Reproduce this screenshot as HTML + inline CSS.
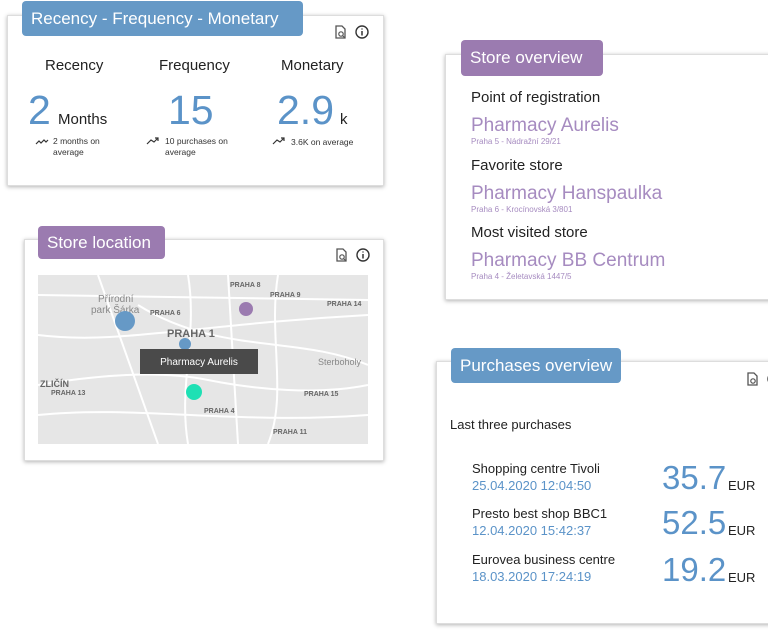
<!DOCTYPE html>
<html><head><meta charset="utf-8"><style>
body{margin:0;width:768px;height:630px;background:#fff;position:relative;overflow:hidden;font-family:"Liberation Sans",sans-serif;color:#222}
.card{position:absolute;background:#fff;border:1px solid #ddd;box-shadow:0 1px 4px rgba(0,0,0,.3)}
.tag{position:absolute;color:#fff;border-radius:4px;font-size:17px;padding-left:9px;line-height:35px;box-sizing:border-box}
.blue{background:#6699c6}.purple{background:#9b7bb0}
.a{position:absolute;white-space:nowrap}
.big{color:#5b93c8;font-size:41px;font-weight:300}
.sm{font-size:8.5px;line-height:11px;color:#333}
.pv{color:#a68bc0}
.icons{position:absolute}
</style></head><body>

<div class="card" style="left:7px;top:15px;width:375px;height:169px"></div>
<div class="tag blue" style="left:22px;top:1px;width:281px;height:35px">Recency - Frequency - Monetary</div>
<svg class="icons" style="left:333px;top:24px" width="40" height="16" viewBox="0 0 40 16"><path d="M3 2h6l3 3v9H3z" fill="none" stroke="#555" stroke-width="1.3"/><circle cx="8" cy="10" r="2.2" fill="none" stroke="#555" stroke-width="1.2"/><path d="M9.5 11.5l2 2" stroke="#555" stroke-width="1.2"/><circle cx="29" cy="8" r="6" fill="none" stroke="#333" stroke-width="1.4"/><path d="M29 7v4.5M29 4.5v1" stroke="#333" stroke-width="1.5"/></svg>
<div class="a" style="left:45px;top:57px;font-size:15px">Recency</div>
<div class="a" style="left:159px;top:57px;font-size:15px">Frequency</div>
<div class="a" style="left:281px;top:57px;font-size:15px">Monetary</div>
<div class="a big" style="left:28px;top:87px">2</div>
<div class="a" style="left:58px;top:111px;font-size:15px">Months</div>
<div class="a big" style="left:168px;top:87px">15</div>
<div class="a big" style="left:277px;top:87px">2.9</div>
<div class="a" style="left:340px;top:111px;font-size:15px">k</div>
<svg class="icons" style="left:35px;top:137px" width="14" height="8"><path d="M1 7l3-3 2 2 3-3 2 2 2-2" fill="none" stroke="#333" stroke-width="1.2"/></svg>
<div class="a sm" style="left:53px;top:136px">2 months on<br>average</div>
<svg class="icons" style="left:146px;top:137px" width="14" height="8"><path d="M1 7l4-4 3 2 4-4M9 1h3v3" fill="none" stroke="#333" stroke-width="1.2"/></svg>
<div class="a sm" style="left:165px;top:136px">10 purchases on<br>average</div>
<svg class="icons" style="left:272px;top:137px" width="14" height="8"><path d="M1 7l4-4 3 2 4-4M9 1h3v3" fill="none" stroke="#333" stroke-width="1.2"/></svg>
<div class="a sm" style="left:291px;top:137px">3.6K on average</div>

<div class="card" style="left:24px;top:239px;width:358px;height:220px"></div>
<div class="tag purple" style="left:38px;top:226px;width:127px;height:33px;line-height:33px">Store location</div>
<svg class="icons" style="left:334px;top:247px" width="40" height="16" viewBox="0 0 40 16"><path d="M3 2h6l3 3v9H3z" fill="none" stroke="#555" stroke-width="1.3"/><circle cx="8" cy="10" r="2.2" fill="none" stroke="#555" stroke-width="1.2"/><path d="M9.5 11.5l2 2" stroke="#555" stroke-width="1.2"/><circle cx="29" cy="8" r="6" fill="none" stroke="#333" stroke-width="1.4"/><path d="M29 7v4.5M29 4.5v1" stroke="#333" stroke-width="1.5"/></svg>
<svg style="position:absolute;left:38px;top:275px" width="330" height="169" viewBox="0 0 330 169">
<rect width="330" height="169" fill="#e6e6e6"/>
<g stroke="#fff" stroke-width="2" fill="none">
<path d="M0 110 C60 100 120 95 170 105 S280 120 330 110"/><path d="M150 0 C160 60 140 110 150 169"/><path d="M0 60 C80 70 150 50 330 40"/><path d="M60 0 L120 169"/><path d="M240 0 C230 60 250 120 230 169"/><path d="M0 140 C100 130 200 150 330 140"/><path d="M100 30 C180 80 260 60 330 90"/><path d="M190 0 L200 169"/><path d="M0 20 L330 25"/>
</g>
<g font-size="7" fill="#666" font-weight="bold"><text x="192" y="12">PRAHA 8</text><text x="232" y="22">PRAHA 9</text><text x="289" y="31">PRAHA 14</text><text x="112" y="40">PRAHA 6</text><text x="13" y="120">PRAHA 13</text><text x="266" y="121">PRAHA 15</text><text x="166" y="138">PRAHA 4</text><text x="235" y="159">PRAHA 11</text><text x="2" y="112" font-size="9">ZLIČÍN</text><text x="129" y="62" font-size="11">PRAHA 1</text></g>
<text x="60" y="27" font-size="10" fill="#888">Přírodní</text><text x="53" y="38" font-size="10" fill="#888">park Šárka</text><text x="280" y="90" font-size="9" fill="#888">Sterboholy</text>
<circle cx="87" cy="46" r="10" fill="#6699c6"/><circle cx="208" cy="34" r="7" fill="#9b7bb0"/><circle cx="147" cy="69" r="6" fill="#6699c6"/><circle cx="156" cy="117" r="8" fill="#1ee0b4"/>
<rect x="102" y="74" width="118" height="25" fill="#4a4a4a"/><text x="161" y="90" font-size="10" fill="#fff" text-anchor="middle">Pharmacy Aurelis</text>
</svg>

<div class="card" style="left:445px;top:54px;width:330px;height:244px"></div>
<div class="tag purple" style="left:461px;top:40px;width:142px;height:36px;line-height:36px">Store overview</div>
<div class="a" style="left:471px;top:89px;font-size:15px">Point of registration</div>
<div class="a pv" style="left:471px;top:115px;font-size:19px">Pharmacy Aurelis</div>
<div class="a pv" style="left:471px;top:137px;font-size:8px">Praha 5 - Nádražní 29/21</div>
<div class="a" style="left:471px;top:157px;font-size:15px">Favorite store</div>
<div class="a pv" style="left:471px;top:183px;font-size:19px">Pharmacy Hanspaulka</div>
<div class="a pv" style="left:471px;top:205px;font-size:8px">Praha 6 - Krocínovská 3/801</div>
<div class="a" style="left:471px;top:224px;font-size:15px">Most visited store</div>
<div class="a pv" style="left:471px;top:250px;font-size:19px">Pharmacy BB Centrum</div>
<div class="a pv" style="left:471px;top:272px;font-size:8px">Praha 4 - Želetavská 1447/5</div>

<div class="card" style="left:436px;top:361px;width:340px;height:261px"></div>
<div class="tag blue" style="left:451px;top:348px;width:170px;height:35px">Purchases overview</div>
<svg class="icons" style="left:745px;top:371px" width="30" height="16" viewBox="0 0 30 16"><path d="M3 2h6l3 3v9H3z" fill="none" stroke="#555" stroke-width="1.3"/><circle cx="8" cy="10" r="2.2" fill="none" stroke="#555" stroke-width="1.2"/><circle cx="29" cy="8" r="6" fill="none" stroke="#333" stroke-width="1.4"/></svg>
<div class="a" style="left:450px;top:417px;font-size:13px">Last three purchases</div>
<div class="a" style="left:472px;top:461px;font-size:13px">Shopping centre Tivoli</div>
<div class="a" style="left:472px;top:478px;font-size:13px;color:#5b93c8">25.04.2020 12:04:50</div>
<div class="a" style="left:472px;top:506px;font-size:13px">Presto best shop BBC1</div>
<div class="a" style="left:472px;top:523px;font-size:13px;color:#5b93c8">12.04.2020 15:42:37</div>
<div class="a" style="left:472px;top:552px;font-size:13px">Eurovea business centre</div>
<div class="a" style="left:472px;top:569px;font-size:13px;color:#5b93c8">18.03.2020 17:24:19</div>
<div class="a big" style="left:662px;top:459px;font-size:33px">35.7</div><div class="a" style="left:728px;top:478px;font-size:13px">EUR</div>
<div class="a big" style="left:662px;top:504px;font-size:33px">52.5</div><div class="a" style="left:728px;top:523px;font-size:13px">EUR</div>
<div class="a big" style="left:662px;top:551px;font-size:33px">19.2</div><div class="a" style="left:728px;top:570px;font-size:13px">EUR</div>
</body></html>
